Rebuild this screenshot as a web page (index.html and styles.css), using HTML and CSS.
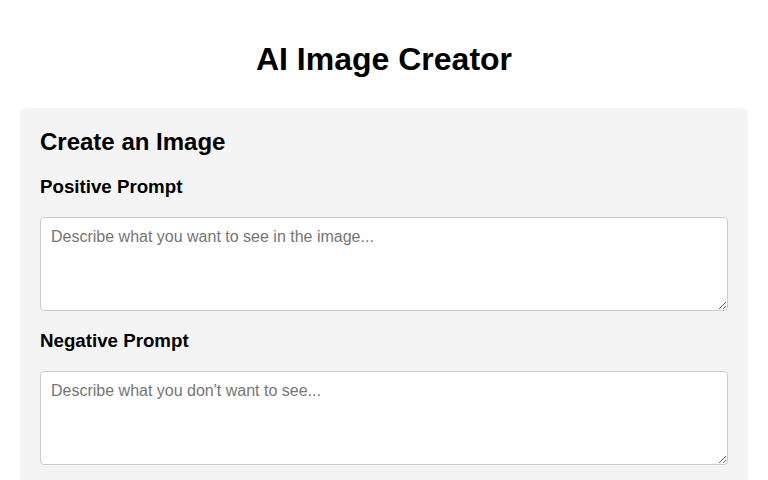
FILE: index.html
```html
<!DOCTYPE html>
<html lang="en">
<head>
<meta charset="utf-8">
<title>AI Image Creator</title>
<link rel="stylesheet" href="styles.css">
</head>
<body>
<div class="page">
  <h1 class="title">AI Image Creator</h1>
  <section class="panel">
    <h2 class="panel-title">Create an Image</h2>
    <div class="field">
      <label class="label" for="pos">Positive Prompt</label>
      <textarea id="pos" class="prompt" placeholder="Describe what you want to see in the image..."></textarea>
    </div>
    <div class="field">
      <label class="label" for="neg">Negative Prompt</label>
      <textarea id="neg" class="prompt" placeholder="Describe what you don't want to see..."></textarea>
    </div>
  </section>
</div>
</body>
</html>
```
FILE: styles.css
```css
* { box-sizing: border-box; }
html, body { margin: 0; padding: 0; background: #fff; }
body {
  font-family: "Liberation Sans", Arial, sans-serif;
  color: #000;
}
.page {
  padding: 41px 20px 20px;
}
.title {
  margin: 0 0 30px;
  font-size: 32px;
  line-height: 37px;
  font-weight: bold;
  text-align: center;
}
.panel {
  background: #f4f4f4;
  border-radius: 8px;
  padding: 20px;
}
.panel-title {
  margin: 0 0 20px;
  font-size: 24px;
  line-height: 28px;
  font-weight: bold;
}
.field {
  display: flex;
  flex-direction: column;
  margin-bottom: 19px;
}
.label {
  font-size: 18.72px;
  line-height: 22px;
  font-weight: bold;
  margin-bottom: 19px;
}
.prompt {
  display: block;
  width: 100%;
  height: 94px;
  padding: 10px;
  border: 1px solid #ccc;
  border-radius: 4px;
  background: #fff;
  font-family: "Liberation Sans", Arial, sans-serif;
  font-size: 16px;
  line-height: 18px;
  color: #000;
  resize: vertical;
}
.prompt::placeholder { color: #757575; }
```
